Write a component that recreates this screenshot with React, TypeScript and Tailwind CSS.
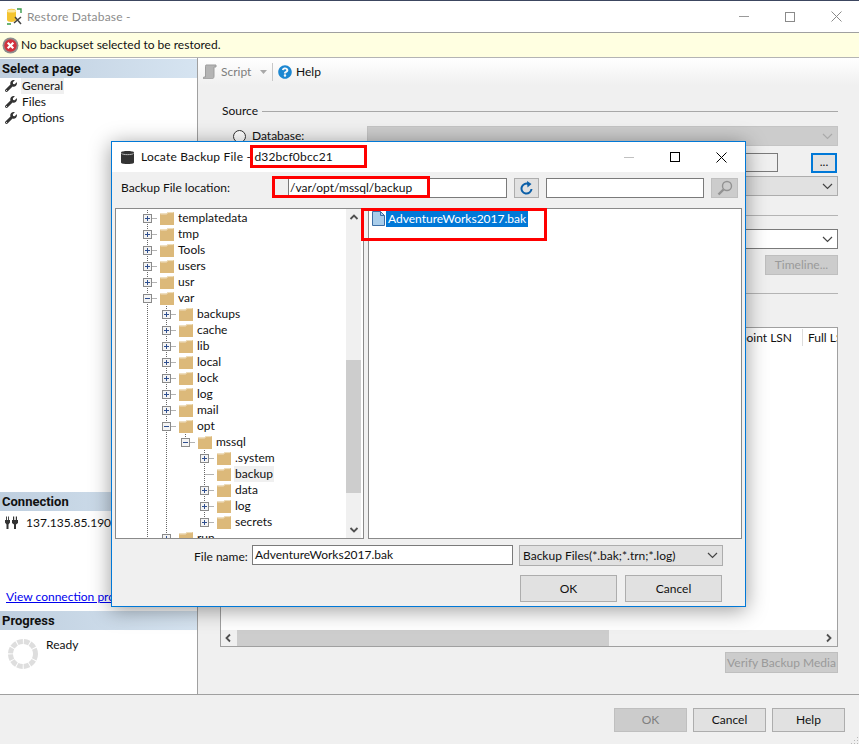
import React from "react";
import { FaWrench, FaQuestionCircle } from "react-icons/fa";

const Chevron = ({ color = "#444" }: { color?: string }) => (
  <svg width="11" height="7" viewBox="0 0 11 7" fill="none"><path d="M1 1l4.500 4.500L10 1" stroke={color} strokeWidth="1.2" /></svg>
);

const Arrow = ({ dir }: { dir: "up" | "down" | "left" | "right" }) => {
  const d = { up: "M1.500 6l3.500-3.500L8.500 6", down: "M1.500 3l3.500 3.500L8.500 3", left: "M6 1.500L2.500 5 6 8.500", right: "M3 1.500L6.500 5 3 8.500" }[dir];
  return <svg width="10" height="10" viewBox="0 0 10 10" fill="none"><path d={d} stroke="#505050" strokeWidth="1.8" /></svg>;
};

const Folder = () => (
  <svg width="14" height="13" viewBox="0 0 14 13" className="shrink-0">
    <path d="M0 1.500h6.500L8 0h6v13H0z" fill="#dcb97a" />
    <path d="M0.500 2h6L8 .6h5.500" fill="none" stroke="#efe0c2" strokeWidth="1" />
  </svg>
);

const Expander = ({ kind, last }: { kind: "plus" | "minus" | "none"; last?: boolean }) => (
  <svg width="19" height="16" viewBox="0 0 19 16" className="shrink-0">
    <path d={`M9.500 0V${last ? 8 : 16}`} stroke="#666" strokeDasharray="1 1" fill="none" />
    <path d="M9.500 8.500H19" stroke="#666" strokeDasharray="1 1" fill="none" />
    {kind !== "none" && (
      <g>
        <rect x="5.500" y="4.500" width="8" height="8" fill="#f4f4f4" stroke="#8a8a8a" />
        <path d="M7 8.500h5" stroke="#2f4f8f" />
        {kind === "plus" && <path d="M9.500 6v5" stroke="#2f4f8f" />}
      </g>
    )}
  </svg>
);

const Guide = ({ on }: { on: boolean }) => (
  <svg width="19" height="16" viewBox="0 0 19 16" className="shrink-0">
    {on && <path d="M9.500 0V16" stroke="#666" strokeDasharray="1 1" fill="none" />}
  </svg>
);

type Row = { t: string; l: number; k: "plus" | "minus" | "none"; g: boolean[]; last?: boolean; sel?: boolean };

const rows: Row[] = [
  { t: "templatedata", l: 0, k: "plus", g: [] },
  { t: "tmp", l: 0, k: "plus", g: [] },
  { t: "Tools", l: 0, k: "plus", g: [] },
  { t: "users", l: 0, k: "plus", g: [] },
  { t: "usr", l: 0, k: "plus", g: [] },
  { t: "var", l: 0, k: "minus", g: [] },
  { t: "backups", l: 1, k: "plus", g: [true] },
  { t: "cache", l: 1, k: "plus", g: [true] },
  { t: "lib", l: 1, k: "plus", g: [true] },
  { t: "local", l: 1, k: "plus", g: [true] },
  { t: "lock", l: 1, k: "plus", g: [true] },
  { t: "log", l: 1, k: "plus", g: [true] },
  { t: "mail", l: 1, k: "plus", g: [true] },
  { t: "opt", l: 1, k: "minus", g: [true] },
  { t: "mssql", l: 2, k: "minus", g: [true, true], last: true },
  { t: ".system", l: 3, k: "plus", g: [true, true, false] },
  { t: "backup", l: 3, k: "none", g: [true, true, false], sel: true },
  { t: "data", l: 3, k: "plus", g: [true, true, false] },
  { t: "log", l: 3, k: "plus", g: [true, true, false] },
  { t: "secrets", l: 3, k: "plus", g: [true, true, false], last: true },
  { t: "run", l: 1, k: "plus", g: [true] },
];

const SectionHead = ({ children }: { children: React.ReactNode }) => (
  <div className="h-[19px] flex items-center pl-[2px] font-bold text-[13px] text-[#111] font-['Roboto',sans-serif] bg-gradient-to-r from-[#bfcfdf] to-[#d6e4f1]">{children}</div>
);

const NavItem = ({ label, active }: { label: string; active?: boolean }) => (
  <div className="h-4 flex items-center pl-[5px]">
    <FaWrench className="text-[#333] w-[12px] h-[12px] shrink-0" />
    <span className={`ml-[4px] px-[1px] leading-4 ${active ? "bg-[#f0f0f0]" : ""}`}>{label}</span>
  </div>
);

const Btn = ({ label, dis, cls }: { label: string; dis?: boolean; cls: string }) => (
  <div className={`flex items-center justify-center border ${dis ? "bg-[#cccccc] border-[#bfbfbf] text-[#7f7f7f]" : "bg-[#e1e1e1] border-[#adadad] text-[#111]"} ${cls}`}>{label}</div>
);

export default function App() {
  return (
    <div className="relative w-[859px] h-[744px] overflow-hidden bg-[#f0f0f0] border-t border-[#3c4660] flex flex-col text-[12px] text-[#111] font-['Lato','Liberation_Sans',sans-serif]">
      {/* window title */}
      <div className="h-[32px] shrink-0 bg-white border-b border-[#a0a0a0] flex items-center pl-[6px]">
        <svg width="17" height="17" viewBox="0 0 17 17">
          <path d="M1 3c0-3 9-3 9 0v9c0 2.500-9 2.500-9 0z" fill="#f4c430" />
          <ellipse cx="5.500" cy="3" rx="4.500" ry="1.600" fill="#fbe7a0" />
          <path d="M11 1h4v4M1 16h4" stroke="#3a9a4a" strokeWidth="1.400" fill="none" />
          <path d="M8 15l7-6M9 9l6 7" stroke="#444" strokeWidth="1.500" />
        </svg>
        <span className="ml-[4px] text-[#8c8c8c] tracking-[0.2px]">Restore Database -</span>
        <div className="ml-auto flex items-center">
          <div className="w-[10px] h-[1px] bg-[#9a9a9a]" />
          <div className="ml-[36px] w-[10px] h-[10px] border border-[#8a8a8a]" />
          <svg className="ml-[36px] mr-[17px]" width="11" height="11" viewBox="0 0 11 11"><path d="M.5.5l10 10M10.500.5l-10 10" stroke="#8a8a8a" /></svg>
        </div>
      </div>

      {/* message */}
      <div className="h-[25px] shrink-0 bg-[#ffffe1] border-b border-[#b4b4b4] flex items-center pl-[2px]">
        <svg width="17" height="17" viewBox="0 0 17 17">
          <circle cx="8.500" cy="8.500" r="8" fill="#8d8d8d" />
          <circle cx="8.500" cy="8.500" r="6.200" fill="#d2323c" />
          <path d="M5.700 5.700l5.600 5.600M11.300 5.700l-5.600 5.600" stroke="#fff" strokeWidth="2.200" />
        </svg>
        <span className="ml-[2px]">No backupset selected to be restored.</span>
      </div>

      {/* body */}
      <div className="flex-1 flex min-h-0">
        <div className="w-[198px] shrink-0 bg-white border-r border-[#a0a0a0] flex flex-col pt-[1px]">
          <div className="h-[433px] shrink-0">
            <SectionHead>Select a page</SectionHead>
            <NavItem label="General" active />
            <NavItem label="Files" />
            <NavItem label="Options" />
          </div>
          <div className="h-[119px] shrink-0 flex flex-col">
            <SectionHead>Connection</SectionHead>
            <div className="flex items-center h-[22px] pl-[4px] mt-[1px]">
              <svg width="15" height="14" viewBox="0 0 15 14" className="shrink-0">
                <path d="M1 4h5v2.500L4.500 8.500V13h-2V8.500L1 6.500zM2 .5h.9V4H2zM4.100.5H5V4h-.9zM8 4h6v3l-2 1.500V13H10V8.500L8 7zM9 .5h1.200V4H9zM11.800.5H13V4h-1.200z" fill="#333" />
              </svg>
              <span className="ml-[7px] whitespace-nowrap">137.135.85.190 [sa]</span>
            </div>
            <a className="mt-[56px] ml-[6px] leading-[14px] text-[#0000ee] underline whitespace-nowrap">View connection properties</a>
          </div>
          <div className="flex-1">
            <SectionHead>Progress</SectionHead>
            <div className="flex pl-[8px] pt-[8px]">
              <svg width="30" height="30" viewBox="0 0 30 30" className="shrink-0 mt-[1px]">
                <circle cx="15" cy="15" r="12.500" fill="none" stroke="#dedede" strokeWidth="5" strokeDasharray="5.600 1" />
              </svg>
              <span className="ml-[8px] leading-4 -mt-[1px]">Ready</span>
            </div>
          </div>
        </div>

        <div className="flex-1 flex flex-col min-w-0">
          <div className="h-[27px] shrink-0 bg-gradient-to-b from-white to-[#f0f0f0] flex items-center pl-[5px]">
            <svg width="14" height="15" viewBox="0 0 14 15">
              <path d="M3 1h10v2h-2v9c0 2-1 3-2.500 3H1c-1 0-1-2 0-2h1.500V3C2.500 2 2.500 1 3 1z" fill="#b4b4b4" stroke="#9d9d9d" />
            </svg>
            <span className="ml-[4px] w-[39px] text-[#7d7d7d]">Script</span>
            <svg width="7" height="4" viewBox="0 0 7 4"><path d="M0 0h7L3.500 4z" fill="#a8a8a8" /></svg>
            <div className="ml-[5px] w-[1px] h-[18px] bg-[#c8c8c8]" />
            <FaQuestionCircle className="ml-[5px] w-[14px] h-[14px] text-[#1c87d1]" />
            <span className="ml-[4px]">Help</span>
          </div>

          <div className="flex-1 flex flex-col pl-[24px] pr-[21px] min-h-0">
            <div className="mt-[18px] h-4 flex items-center">
              <span className="leading-4 w-[40px]">Source</span>
              <div className="flex-1 h-[1px] bg-[#a8a8a8]" />
            </div>
            <div className="mt-[7px] h-[20px] flex items-center">
              <div className="ml-[11px] w-[13px] h-[13px] rounded-full border border-[#333] bg-white" />
              <span className="ml-[6px] w-[115px]">Database:</span>
              <div className="flex-1 h-full bg-[#cccccc] border border-[#c4c4c4] flex items-center justify-end pr-[4px]"><Chevron color="#aaa" /></div>
            </div>
            <div className="mt-[7px] h-[19px] flex">
              <div className="ml-[145px] w-[411px] border border-[#7a7a7a] bg-[#f0f0f0]" />
              <div className="ml-[33px] w-[26px] h-[20px] border-2 border-[#0078d7] bg-[#e1e1e1] flex items-center justify-center leading-none pb-[2px]">...</div>
            </div>
            <div className="mt-[4px] h-[20px] flex">
              <div className="ml-[145px] flex-1 bg-[#e1e1e1] border border-[#adadad] flex items-center justify-end pr-[4px]"><Chevron /></div>
            </div>
            <div className="mt-[19px] h-[1px] bg-[#b4b4b4]" />
            <div className="mt-[13px] h-[20px] flex">
              <div className="ml-[145px] flex-1 bg-white border border-[#7a7a7a] flex items-center justify-end pr-[4px]"><Chevron /></div>
            </div>
            <div className="mt-[6px] h-[20px] flex justify-end">
              <Btn label="Timeline..." dis cls="w-[73px] text-[#9a9a9a]" />
            </div>
            <div className="mt-[18px] h-[1px] bg-[#b4b4b4]" />

            <div className="mt-[33px] -ml-[2px] h-[320px] border border-[#a0a0a0] bg-white flex flex-col overflow-hidden">
              <div className="h-[19px] shrink-0 flex justify-end items-center overflow-hidden whitespace-nowrap">
                <span className="pr-[10px]">Checkpoint LSN</span>
                <div className="w-[1px] h-[17px] bg-[#dcdcdc]" />
                <span className="w-[34px] pl-[5px] shrink-0 overflow-hidden">Full LSN</span>
              </div>
              <div className="flex-1" />
              <div className="h-[16px] shrink-0 bg-[#f0f0f0] flex items-center">
                <div className="w-[16px] flex justify-center"><Arrow dir="left" /></div>
                <div className="w-[372px] h-full bg-[#cdcdcd]" />
                <div className="flex-1 flex justify-end pr-[3px]"><Arrow dir="right" /></div>
              </div>
            </div>
            <div className="mt-[5px] flex justify-end">
              <Btn label="Verify Backup Media" dis cls="w-[113px] h-[21px] text-[#9a9a9a]" />
            </div>
          </div>
        </div>
      </div>

      {/* footer */}
      <div className="relative h-[50px] shrink-0 border-t border-[#a0a0a0] flex justify-end pt-[13px] pr-[14px] gap-[6px]">
        <Btn label="OK" dis cls="w-[73px] h-[24px]" />
        <Btn label="Cancel" cls="w-[73px] h-[24px]" />
        <Btn label="Help" cls="w-[73px] h-[24px]" />
        <svg className="absolute right-0 bottom-0" width="8" height="8" viewBox="0 0 8 8">
          <path d="M6 1h1v1H6zM3 4h1v1H3zM6 4h1v1H6zM0 7h1v1H0zM3 7h1v1H3zM6 7h1v1H6z" fill="#b8b8b8" />
        </svg>
      </div>

      {/* dialog */}
      <div className="absolute left-[111px] top-[140px] w-[635px] h-[466px] border border-[#0078d7] bg-[#f0f0f0] shadow-[0_3px_20px_rgba(0,0,0,0.4)] flex flex-col">
        <div className="h-[30px] shrink-0 bg-white flex items-center pl-[9px]">
          <svg width="13" height="15" viewBox="0 0 13 15">
            <path d="M0 2.500C0 .5 13 .5 13 2.500v10c0 2-13 2-13 0z" fill="#333" />
            <path d="M.5 3.500c1.500 1.500 10.500 1.500 12 0" stroke="#bbb" fill="none" />
          </svg>
          <span className="ml-[7px] tracking-[0.2px] whitespace-nowrap">Locate Backup File - d32bcf0bcc21</span>
          <div className="ml-auto flex items-center">
            <div className="w-[10px] h-[1px] bg-[#c0c0c0]" />
            <div className="ml-[36px] w-[10px] h-[10px] border border-black" />
            <svg className="ml-[36px] mr-[18px]" width="11" height="11" viewBox="0 0 11 11"><path d="M.5.5l10 10M10.500.5l-10 10" stroke="#000" /></svg>
          </div>
        </div>

        <div className="mt-[6px] h-[20px] shrink-0 flex items-center pl-[9px]">
          <span className="w-[167px]">Backup File location:</span>
          <div className="w-[219px] h-full bg-white border border-[#7a7a7a] flex items-center pl-[1px]">/var/opt/mssql/backup</div>
          <div className="ml-[7px] w-[25px] h-[20px] bg-[#e1e1e1] border border-[#adadad] flex items-center justify-center">
            <svg width="14" height="15" viewBox="0 0 14 15" fill="none">
              <path d="M11.500 8a5 5 0 1 1-3-5" stroke="#0b5fa8" strokeWidth="2" />
              <path d="M7 0l4.500 3L7.500 6.500z" fill="#0b5fa8" />
            </svg>
          </div>
          <div className="ml-[7px] w-[158px] h-full bg-white border border-[#7a7a7a]" />
          <div className="ml-[7px] w-[27px] h-[20px] bg-[#cccccc] border border-[#bfbfbf] flex items-center justify-center">
            <svg width="16" height="16" viewBox="0 0 16 16" fill="none">
              <circle cx="10" cy="6" r="4.500" stroke="#929292" strokeWidth="1.400" />
              <path d="M6.500 9.500L1.500 14.500" stroke="#929292" strokeWidth="2.400" />
            </svg>
          </div>
        </div>

        <div className="mt-[10px] h-[331px] shrink-0 flex pl-[3px]">
          <div className="w-[249px] border border-[#8a8a8a] bg-white flex overflow-hidden">
            <div className="w-[230px] pt-[1px] overflow-hidden">
              {rows.map((r, i) => (
                <div key={i} className="h-4 flex items-center pl-[22px] whitespace-nowrap">
                  {r.g.map((on, j) => <Guide key={j} on={on} />)}
                  <Expander kind={r.k} last={r.last} />
                  <div className="ml-[3px]"><Folder /></div>
                  <span className={`ml-[3px] px-[1px] leading-4 ${r.sel ? "bg-[#f0f0f0]" : ""}`}>{r.t}</span>
                </div>
              ))}
            </div>
            <div className="w-[15px] shrink-0 bg-[#f0f0f0] flex flex-col items-center">
              <div className="h-[17px] flex items-center justify-center"><Arrow dir="up" /></div>
              <div className="mt-[134px] w-full h-[133px] bg-[#cdcdcd]" />
              <div className="mt-auto h-[17px] flex items-center justify-center"><Arrow dir="down" /></div>
            </div>
          </div>
          <div className="ml-[4px] w-[374px] border border-[#8a8a8a] bg-white pl-[3px] pt-[1px]">
            <div className="flex items-center h-[17px]">
              <svg width="13" height="15" viewBox="0 0 13 15" className="shrink-0">
                <path d="M.5.5h8l4 4v10H.5z" fill="#a9cdea" stroke="#3b6ea5" />
                <path d="M8.500.5v4h4" fill="none" stroke="#3b6ea5" />
              </svg>
              <span className="ml-[1px] px-[2px] h-[17px] leading-[17px] bg-[#0078d7] text-white whitespace-nowrap">AdventureWorks2017.bak</span>
            </div>
          </div>
        </div>

        <div className="mt-[6px] h-[21px] shrink-0 flex">
          <span className="ml-[82px] w-[58px] leading-[24px]">File name:</span>
          <div className="w-[261px] h-[20px] bg-white border border-[#7a7a7a] flex items-center pl-[2px]">AdventureWorks2017.bak</div>
          <div className="ml-[6px] w-[204px] h-[21px] bg-[#e1e1e1] border border-[#adadad] flex items-center pl-[3px] pr-[4px] justify-between">
            <span>Backup Files(*.bak;*.trn;*.log)</span>
            <Chevron />
          </div>
        </div>

        <div className="mt-[9px] flex pl-[408px] gap-[8px]">
          <Btn label="OK" cls="w-[97px] h-[27px]" />
          <Btn label="Cancel" cls="w-[97px] h-[27px]" />
        </div>
      </div>

      {/* annotations */}
      <div className="absolute left-[250px] top-[144px] w-[117px] h-[23px] border-[3px] border-[#ff0000]" />
      <div className="absolute left-[272px] top-[175px] w-[158px] h-[22px] border-[3px] border-[#ff0000]" />
      <div className="absolute left-[361px] top-[207px] w-[186px] h-[33px] border-[3px] border-[#ff0000]" />
    </div>
  );
}
